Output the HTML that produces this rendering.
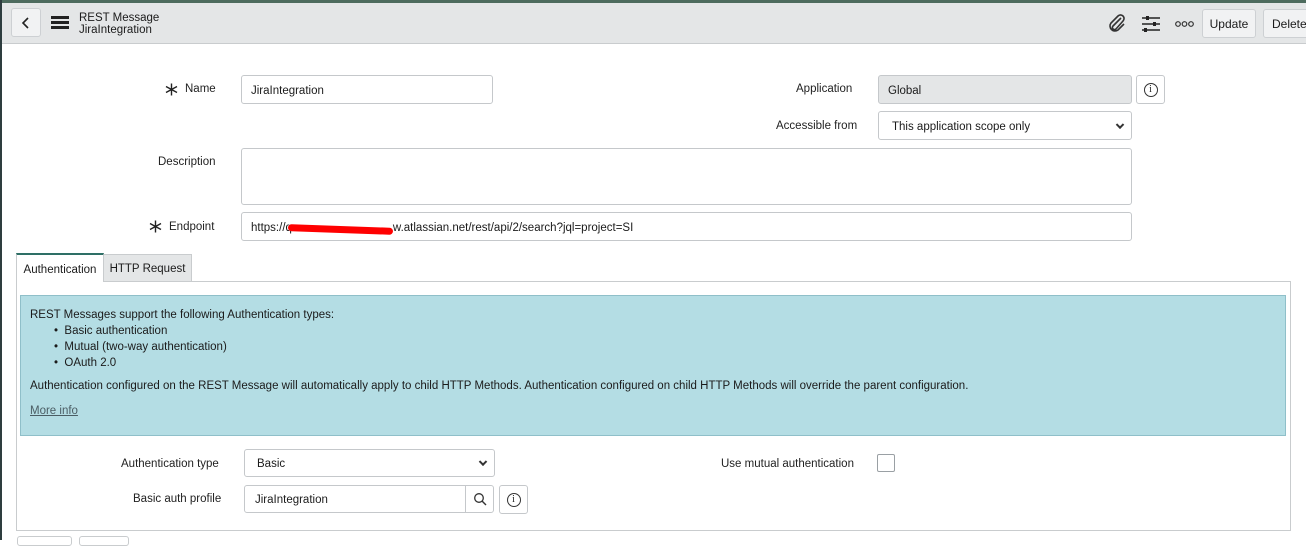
<!DOCTYPE html>
<html><head><style>
*{box-sizing:border-box;margin:0;padding:0}
body{width:1306px;height:540px;overflow:hidden;background:#fff;font-family:"Liberation Sans",sans-serif;font-size:11.5px;color:#1b1b1b;position:relative}
.a{position:absolute}
.inp{position:absolute;border:1px solid #c5c8cb;border-radius:3px;background:#fff;padding-left:9px;padding-top:2px;display:flex;align-items:center;font-size:11.5px}
.lbl{position:absolute;font-size:11.5px;color:#222;text-align:right}
.btn{position:absolute;border:1px solid #cdd0d3;border-radius:3px;background:#f1f2f3;display:flex;align-items:center;justify-content:center;font-size:12px}
.chev{position:absolute;right:8px;top:50%;width:6px;height:6px;border-right:2px solid #333;border-bottom:2px solid #333;transform:translateY(-70%) rotate(45deg)}
.info{position:absolute;width:29px;height:29px;border:1px solid #c5c8cb;border-radius:3px;background:#fff;display:flex;align-items:center;justify-content:center}
.info span{width:14px;height:14px;border:1.3px solid #333;border-radius:50%;font-size:10px;line-height:12px;text-align:center;font-family:"Liberation Serif",serif}
</style></head><body>
<div class="a" style="left:0;top:0;width:1306px;height:3px;background:#4d6b5e"></div>
<div class="a" style="left:0;top:0;width:2px;height:540px;background:#2e3d3f"></div>
<div class="a" style="left:2px;top:3px;width:1304px;height:41px;background:#e4e6e7;border-bottom:1px solid #c9ccce"></div>
<div class="btn" style="left:11px;top:8px;width:30px;height:29px"><svg width="10" height="12"><path d="M7 1L2 6l5 5" fill="none" stroke="#222" stroke-width="1.6"/></svg></div>
<div class="a" style="left:51px;top:16px;width:18px;height:3px;background:#222;box-shadow:0 5px 0 #222,0 10px 0 #222"></div>
<div class="a" style="left:79px;top:12px;font-size:11.5px;line-height:12px">REST Message<br>JiraIntegration</div>
<svg class="a" style="left:1107px;top:13px" width="20" height="20" viewBox="0 0 20 20"><path d="M14 5 L6 13 a2 2 0 0 0 3 3 L16 8 a3.5 3.5 0 0 0 -5 -5 L4 10 a5 5 0 0 0 7 7 L17 11" fill="none" stroke="#333" stroke-width="1.6"/></svg>
<svg class="a" style="left:1141px;top:14px" width="20" height="20"><path d="M1 4h18M1 10h18M1 16h18" stroke="#222" stroke-width="1.4"/><rect x="5" y="2" width="3" height="4" fill="#222"/><rect x="12" y="8" width="3" height="4" fill="#222"/><rect x="3" y="14" width="3" height="4" fill="#222"/></svg>
<svg class="a" style="left:1175px;top:20px" width="20" height="8"><circle cx="3" cy="4" r="2.3" fill="none" stroke="#333" stroke-width="1.2"/><circle cx="9.5" cy="4" r="2.3" fill="none" stroke="#333" stroke-width="1.2"/><circle cx="16" cy="4" r="2.3" fill="none" stroke="#333" stroke-width="1.2"/></svg>
<div class="btn" style="left:1202px;top:9px;width:54px;height:29px">Update</div>
<div class="btn" style="left:1263px;top:9px;width:50px;height:29px;justify-content:flex-start;padding-left:8px">Delete</div>

<svg class="a" style="left:165px;top:83px" width="13" height="13"><path d="M6.5 0.5v12M1 3.5l11 6M1 9.5l11-6" stroke="#222" stroke-width="1.4"/></svg>
<div class="lbl" style="left:185px;top:83px">Name</div>
<div class="inp" style="left:241px;top:75px;width:252px;height:29px">JiraIntegration</div>
<div class="lbl" style="left:796px;top:83px">Application</div>
<div class="inp" style="left:878px;top:75px;width:254px;height:29px;background:#e4e6e7">Global</div>
<div class="info" style="left:1136px;top:75px"><span>i</span></div>
<div class="lbl" style="left:776px;top:120px">Accessible from</div>
<div class="inp" style="left:878px;top:111px;width:254px;height:29px;padding-left:13px">This application scope only<div class="chev"></div></div>
<div class="lbl" style="left:158px;top:156px">Description</div>
<div class="inp" style="left:241px;top:148px;width:891px;height:57px"></div>
<svg class="a" style="left:149px;top:220px" width="13" height="13"><path d="M6.5 0.5v12M1 3.5l11 6M1 9.5l11-6" stroke="#222" stroke-width="1.4"/></svg>
<div class="lbl" style="left:169px;top:221px">Endpoint</div>
<div class="inp" style="left:241px;top:212px;width:891px;height:29px">https://q<span style="display:inline-block;width:105px;height:7px;background:#f00;border-radius:4px;margin:3px 0 0 -4px;transform:rotate(2deg)"></span>w.atlassian.net/rest/api/2/search?jql=project=SI</div>

<div class="a" style="left:16px;top:281px;width:1275px;height:250px;border:1px solid #c9ccce"></div>
<div class="a" style="left:16px;top:253px;width:88px;height:29px;background:#fff;border:1px solid #c9ccce;border-top:2px solid #2e6f66;border-bottom:none;text-align:center;line-height:30px">Authentication</div>
<div class="a" style="left:104px;top:254px;width:88px;height:28px;background:#e4e6e7;border:1px solid #c9ccce;border-left:none;text-align:center;line-height:29px">HTTP Request</div>
<div class="a" style="left:20px;top:295px;width:1266px;height:141px;background:#b4dde4;border:1px solid #8fbfc9;padding:11px 9px;line-height:16px">
REST Messages support the following Authentication types:
<div style="padding-left:24px">&bull;&nbsp;&nbsp;Basic authentication<br>&bull;&nbsp;&nbsp;Mutual (two-way authentication)<br>&bull;&nbsp;&nbsp;OAuth 2.0</div>
<div style="margin-top:7px">Authentication configured on the REST Message will automatically apply to child HTTP Methods. Authentication configured on child HTTP Methods will override the parent configuration.</div>
<div style="margin-top:9px;color:#4b5d64;text-decoration:underline">More info</div>
</div>
<div class="lbl" style="left:121px;top:458px">Authentication type</div>
<div class="inp" style="left:244px;top:449px;width:251px;height:28px;padding-left:12px">Basic<div class="chev"></div></div>
<div class="lbl" style="left:721px;top:458px">Use mutual authentication</div>
<div class="a" style="left:877px;top:454px;width:18px;height:18px;border:1px solid #9aa0a4;border-radius:2px"></div>
<div class="lbl" style="left:133px;top:493px">Basic auth profile</div>
<div class="inp" style="left:244px;top:485px;width:222px;height:28px;padding-left:10px;border-radius:3px 0 0 3px">JiraIntegration</div>
<div class="inp" style="left:465px;top:485px;width:29px;height:28px;padding:0;justify-content:center;border-radius:0 3px 3px 0"><svg width="14" height="14"><circle cx="6" cy="6" r="4.3" fill="none" stroke="#333" stroke-width="1.3"/><path d="M9 9l4 4" stroke="#333" stroke-width="1.4"/></svg></div>
<div class="info" style="left:499px;top:485px"><span>i</span></div>
<div class="a" style="left:17px;top:536px;width:55px;height:10px;border:1px solid #c9ccce;border-radius:3px"></div>
<div class="a" style="left:79px;top:536px;width:50px;height:10px;border:1px solid #c9ccce;border-radius:3px"></div>
</body></html>
